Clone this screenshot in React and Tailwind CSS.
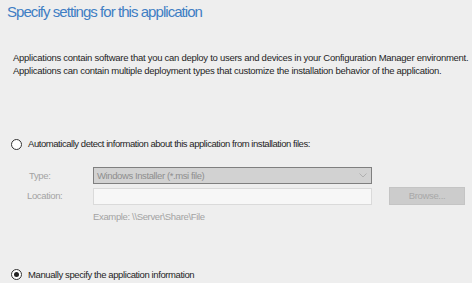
export default function App() {
  return (
    <div className="w-[474px] h-[287px] bg-white overflow-hidden">
      <div className="w-[472px] h-[283px] bg-[#eeeeee] font-['Liberation_Sans',Arial,sans-serif] text-[#1e1e1e] flex flex-col">
        <h1 className="pl-[7px] pt-[3px] text-[15px] leading-[18px] text-[#3f7ec4] tracking-[-0.95px]">
          Specify settings for this application
        </h1>

        <p className="mt-[30px] pl-[13px] text-[9.5px] leading-[13px] tracking-[-0.27px] whitespace-nowrap">
          Applications contain software that you can deploy to users and devices in your Configuration Manager environment.
          <br />
          Applications can contain multiple deployment types that customize the installation behavior of the application.
        </p>

        <label className="mt-[60px] pl-[11px] flex items-center gap-[6px] text-[9.5px] tracking-[-0.45px]">
          <span className="w-[11px] h-[11px] rounded-full border border-[#333] bg-white" />
          Automatically detect information about this application from installation files:
        </label>

        <div className="mt-[16px] grid grid-cols-[47px_279px_auto] gap-x-[17px] gap-y-[3px] pl-[29px] items-center text-[9.5px] tracking-[-0.35px] text-[#a3a3a3]">
          <span>Type:</span>
          <div className="h-[17px] border border-[#7f7f7f] bg-[#d2d2d2] flex items-center justify-between pl-[3px] pr-[4px] text-[9.5px] tracking-[-0.4px] text-[#8e8e8e]">
            <span>Windows Installer (*.msi file)</span>
            <svg width="8" height="5" viewBox="0 0 8 5" fill="none" stroke="#b0b0b0" strokeWidth="1">
              <path d="M0.5 0.5 L4 4 L7.5 0.5" />
            </svg>
          </div>
          <span />
          <span className="-ml-[2px]">Location:</span>
          <div className="h-[17px] border border-[#dadada] bg-[#f7f7f7]" />
          <div className="h-[18px] w-[76px] bg-[#cccccc] border border-[#c4c4c4] flex items-center justify-center text-[#a8a8a8]">
            Browse...
          </div>
          <span />
          <span className="pt-[2px]">Example: \\Server\Share\File</span>
          <span />
        </div>

        <label className="mt-auto mb-[1px] pl-[11px] flex items-center gap-[6px] text-[9.5px] tracking-[-0.4px]">
          <span className="w-[11px] h-[11px] rounded-full border border-[#333] bg-white flex items-center justify-center">
            <span className="w-[5px] h-[5px] rounded-full bg-[#222]" />
          </span>
          Manually specify the application information
        </label>
      </div>
    </div>
  );
}
